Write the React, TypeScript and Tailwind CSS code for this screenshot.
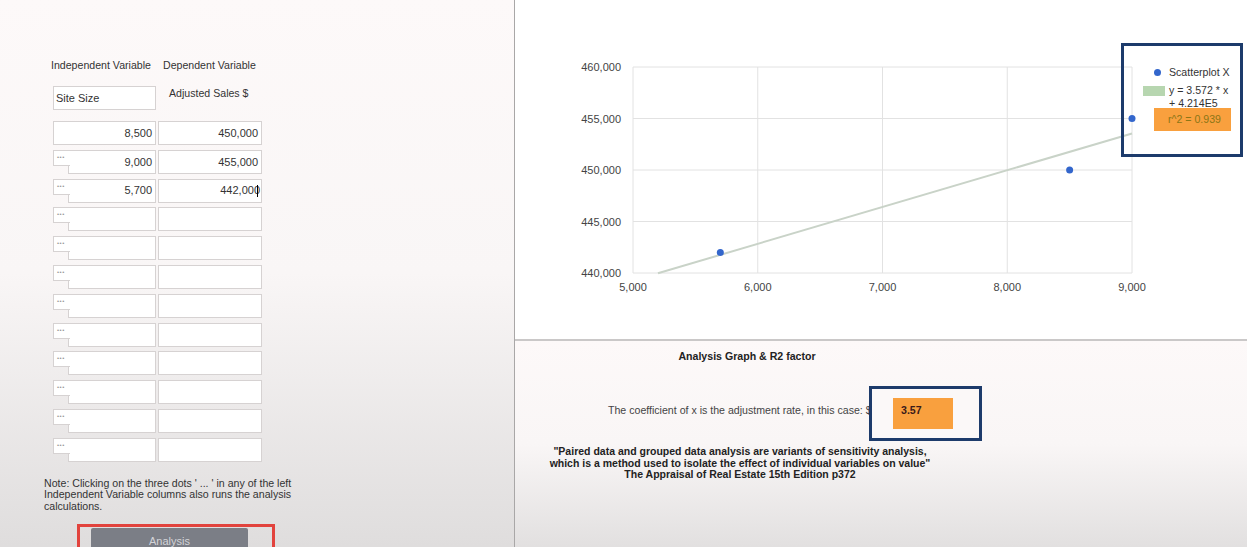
import React from "react";

type Row = { x?: string; y?: string; caret?: boolean };

const rows: Row[] = [
  { x: "8,500", y: "450,000" },
  { x: "9,000", y: "455,000" },
  { x: "5,700", y: "442,000", caret: true },
  {}, {}, {}, {}, {}, {}, {}, {}, {},
];

const points = [
  { x: 5700, y: 442000 },
  { x: 8500, y: 450000 },
  { x: 9000, y: 455000 },
];

// plot area inside the chart svg
const PX0 = 118;
const PX1 = 617;
const PY0 = 67;
const PY1 = 273;
const sx = (v: number) => PX0 + ((v - 5000) / 4000) * (PX1 - PX0);
const sy = (v: number) => PY1 - ((v - 440000) / 20000) * (PY1 - PY0);
const trend = (x: number) => 3.572 * x + 421400;

const DataRow = ({ row, index }: { row: Row; index: number }) => (
  <div className="flex gap-[2px] h-6">
    <div className="relative w-[103px] h-6">
      <div
        className={`absolute top-0 bottom-0 right-0 bg-white border border-[#d6d2d2] flex items-center justify-end pr-[3px] text-[11px] text-[#333] ${
          index === 0 ? "left-0" : "left-[15px]"
        }`}
      >
        {row.x}
      </div>
      {index > 0 && (
        <div className="absolute left-0 top-0 w-[17px] h-[16px] bg-white border-l border-t border-b border-[#d6d2d2] text-[6px] leading-[6px] text-[#999] pl-[3px] pt-[3px] tracking-[0.5px]">
          •••
        </div>
      )}
    </div>
    <div className="w-[104px] h-6 bg-white border border-[#d6d2d2] flex items-center justify-end pr-[3px] text-[11px] text-[#333]">
      {row.y}
      {row.caret && <span className="w-px h-[12px] bg-black -ml-[3px]" />}
    </div>
  </div>
);

const Chart = () => (
  <svg width={732} height={339} className="block">
    {[440000, 445000, 450000, 455000, 460000].map((v) => (
      <g key={v}>
        <line x1={PX0} x2={PX1} y1={sy(v)} y2={sy(v)} stroke="#e2e2e2" strokeWidth={1} />
        <text x={106} y={sy(v) + 4} textAnchor="end" fontSize={11} fill="#444">
          {v.toLocaleString("en-US")}
        </text>
      </g>
    ))}
    {[5000, 6000, 7000, 8000, 9000].map((v) => (
      <g key={v}>
        <line x1={sx(v)} x2={sx(v)} y1={PY0} y2={PY1} stroke="#e2e2e2" strokeWidth={1} />
        <text x={sx(v)} y={291} textAnchor="middle" fontSize={11} fill="#444">
          {v.toLocaleString("en-US")}
        </text>
      </g>
    ))}
    <line
      x1={sx(5200)}
      y1={sy(trend(5200))}
      x2={sx(9000)}
      y2={sy(trend(9000))}
      stroke="#c9d3c8"
      strokeWidth={2}
    />
    {points.map((p) => (
      <circle key={p.x} cx={sx(p.x)} cy={sy(p.y)} r={3.5} fill="#3366cc" />
    ))}
  </svg>
);

export default function App() {
  return (
    <div className="flex w-[1247px] h-[547px] overflow-hidden font-['Liberation_Sans',Arial,sans-serif] text-[#333]">
      {/* input panel */}
      <div className="w-[515px] shrink-0 h-full border-r border-[#a9a7a7] bg-gradient-to-b from-[#fdf9f9] via-[#f9f6f6] to-[#dfdddd] flex flex-col pt-[59px]">
        <div className="flex text-[10.6px] leading-[13px] ml-[51px]">
          <span className="w-[112px]">Independent Variable</span>
          <span>Dependent Variable</span>
        </div>
        <div className="flex gap-[2px] ml-[53px] mt-[14px]">
          <div className="w-[103px] h-6 bg-white border border-[#d6d2d2] flex items-center pl-[2px] text-[11px]">
            Site Size
          </div>
          <div className="pl-[11px] pt-[1px] text-[10.6px] leading-[13px]">Adjusted Sales $</div>
        </div>
        <div className="flex flex-col gap-[4.8px] ml-[53px] mt-[11px]">
          {rows.map((r, i) => (
            <DataRow key={i} row={r} index={i} />
          ))}
        </div>
        <p className="ml-[44px] mt-[16px] w-[255px] text-[10.6px] leading-[11.7px]">
          Note: Clicking on the three dots ' ... ' in any of the left Independent Variable columns also runs the
          analysis calculations.
        </p>
        <div className="ml-[77px] mt-[11px] w-[198px] h-[26px] border-[3px] border-[#e2433d] pl-[11px] pt-px">
          <button className="w-[157px] h-[22px] bg-[#7b7e86] rounded-[2px] text-[11px] text-[#d3d4d8] pt-[4px]">
            Analysis
          </button>
        </div>
      </div>

      {/* chart + results */}
      <div className="flex-1 flex flex-col">
        <div className="relative h-[339px] bg-white">
          <Chart />
          <div className="absolute left-[606px] top-[43px] w-[122px] h-[114px] border-[3px] border-[#1d3b6b] text-[10.6px] leading-[13px] text-[#333]">
            <div className="flex items-center mt-[20px] ml-[30px]">
              <span className="w-[7px] h-[7px] rounded-full bg-[#3366cc]" />
              <span className="ml-[8px]">Scatterplot X</span>
            </div>
            <div className="flex items-start mt-[7px] ml-[19px]">
              <span className="w-[22px] h-[10px] bg-[#b7d6b0]" />
              <span className="ml-[4px] leading-[12.5px] mt-[-2px]">
                y = 3.572 * x
                <br />+ 4.214E5
              </span>
            </div>
            <div className="absolute left-[30px] top-[62px] w-[77px] h-[23px] bg-[#f9a03e] flex items-center pl-[14px] text-[#8c7616]">
              r^2 = 0.939
            </div>
          </div>
        </div>
        <div className="flex-1 border-t-2 border-[#cac8c8] bg-gradient-to-b from-[#fdf9f9] via-[#f9f6f6] to-[#e2e0e0]">
          <div className="ml-[30px] w-[404px] text-center font-bold text-[10.6px] leading-[13px] text-[#222] mt-[9px]">
            Analysis Graph &amp; R2 factor
          </div>
          <div className="flex items-start ml-[93px] mt-[23px]">
            <span className="w-[264px] whitespace-nowrap text-[10.6px] leading-[13px] text-[#444] mt-[18px]">
              The coefficient of x is the adjustment rate, in this case: $
            </span>
            <div className="-ml-[3px] w-[113px] h-[55px] border-[3px] border-[#1d3b6b] bg-[#fbf8f8] pl-[21px] pt-[9px]">
              <div className="w-[60px] h-[31px] bg-[#f9a03e] pl-[8px] pt-[5px] text-[10.6px] font-bold text-[#3b1a1a]">
                3.57
              </div>
            </div>
          </div>
          <p className="ml-[20px] w-[410px] mt-[5px] text-center font-bold text-[10.5px] leading-[11.6px] text-[#222]">
            "Paired data and grouped data analysis are variants of sensitivity analysis,
            <br />
            which is a method used to isolate the effect of individual variables on value"
            <br />
            The Appraisal of Real Estate 15th Edition p372
          </p>
        </div>
      </div>
    </div>
  );
}
